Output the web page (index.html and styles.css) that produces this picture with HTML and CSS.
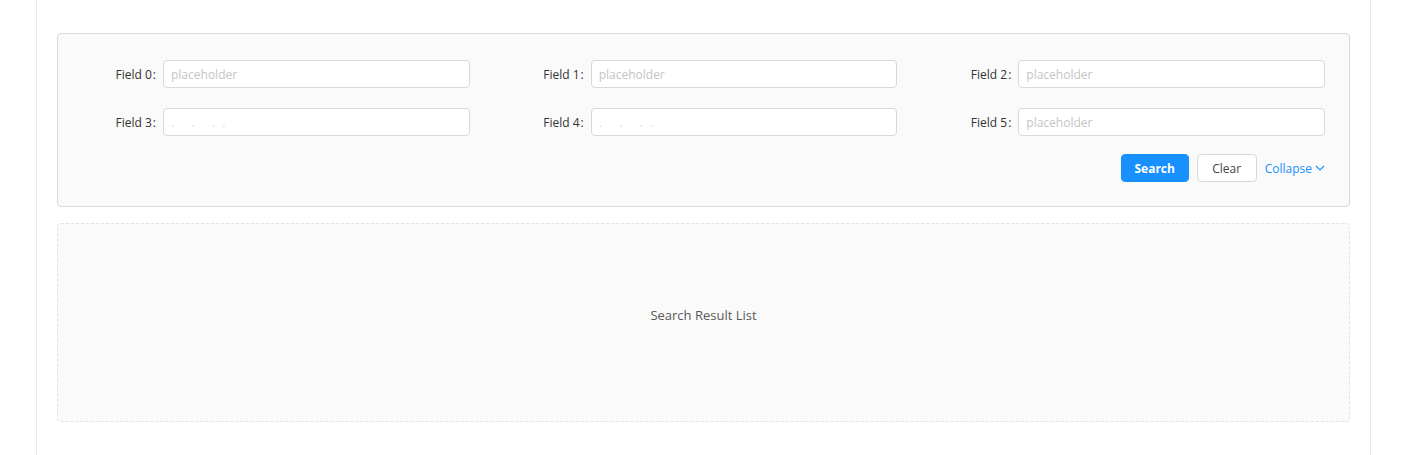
FILE: index.html
```html
<!DOCTYPE html>
<html lang="en">
<head>
<meta charset="utf-8">
<title>Search</title>
<link rel="stylesheet" href="styles.css">
</head>
<body>
<div class="page">
  <div class="container">
    <form class="search-panel">
      <div class="fields">
        <div class="field"><label class="label">Field 0</label><input class="input" placeholder="placeholder"></div>
        <div class="field"><label class="label">Field 1</label><input class="input" placeholder="placeholder"></div>
        <div class="field"><label class="label">Field 2</label><input class="input" placeholder="placeholder"></div>
        <div class="field"><label class="label">Field 3</label><input class="input dots" placeholder=".   .   . ."></div>
        <div class="field"><label class="label">Field 4</label><input class="input dots" placeholder=".   .   . ."></div>
        <div class="field"><label class="label">Field 5</label><input class="input" placeholder="placeholder"></div>
      </div>
      <div class="actions">
        <button type="button" class="btn btn-primary">Search</button>
        <button type="button" class="btn btn-default">Clear</button>
        <a class="collapse">Collapse<svg class="chev" width="10" height="10" viewBox="0 0 10 10"><path d="M1 3 L5 7 L9 3" fill="none" stroke="currentColor" stroke-width="1.1"/></svg></a>
      </div>
    </form>
    <div class="results">Search Result List</div>
  </div>
</div>
</body>
</html>
```
FILE: styles.css
```css
html, body {
  margin: 0;
  padding: 0;
  background: #fff;
}
body {
  font-family: "Open Sans", "Noto Sans", sans-serif;
  font-size: 12px;
  color: #333;
}
.page {
  width: 1403px;
  height: 455px;
  overflow: hidden;
}
.container {
  margin-left: 36px;
  width: 1293px;
  border-left: 1px solid #e8e8e8;
  border-right: 1px solid #e8e8e8;
  padding: 33px 20px 40px 20px;
  min-height: 500px;
}
.search-panel {
  margin: 0;
  background: #fafafa;
  border: 1px solid #d9d9d9;
  border-radius: 4px;
  padding: 26px 24px 24px 24px;
}
.fields {
  display: grid;
  grid-template-columns: repeat(3, 1fr);
  column-gap: 40px;
  row-gap: 20px;
}
.field {
  display: flex;
  align-items: center;
  height: 28px;
}
.label {
  width: 81px;
  flex: none;
  text-align: right;
  padding-right: 7px;
  box-sizing: border-box;
  color: #333;
  white-space: nowrap;
}
.label::after {
  content: ":";
  margin-left: 1px;
}
.input {
  flex: 1;
  min-width: 0;
  height: 28px;
  box-sizing: border-box;
  border: 1px solid #d9d9d9;
  border-radius: 4px;
  background: #fff;
  padding: 0 7px;
  font-family: inherit;
  font-size: 12px;
  color: #333;
  outline: none;
}
.input::placeholder {
  color: #c4c4c4;
}
.input.dots::placeholder {
  color: #d8d8d8;
  letter-spacing: 2px;
}
.actions {
  display: flex;
  justify-content: flex-end;
  align-items: center;
  margin-top: 18px;
  gap: 8px;
}
.btn {
  height: 28px;
  box-sizing: border-box;
  border-radius: 4px;
  font-family: inherit;
  font-size: 12px;
  padding: 0;
  cursor: pointer;
}
.btn-primary {
  width: 68px;
  background: #1890ff;
  border: 1px solid #1890ff;
  color: #fff;
  font-weight: 700;
}
.btn-default {
  width: 60px;
  background: #fff;
  border: 1px solid #d9d9d9;
  color: #444;
}
.collapse {
  display: inline-flex;
  align-items: center;
  gap: 3px;
  color: #1890ff;
  cursor: pointer;
}
.chev {
  display: block;
}
.results {
  margin-top: 16px;
  height: 199px;
  box-sizing: border-box;
  border: 1px dashed #e3e3e3;
  border-radius: 4px;
  background: #fafafa;
  display: flex;
  align-items: center;
  justify-content: center;
  padding-bottom: 16px;
  font-size: 13px;
  color: #595959;
}
```
